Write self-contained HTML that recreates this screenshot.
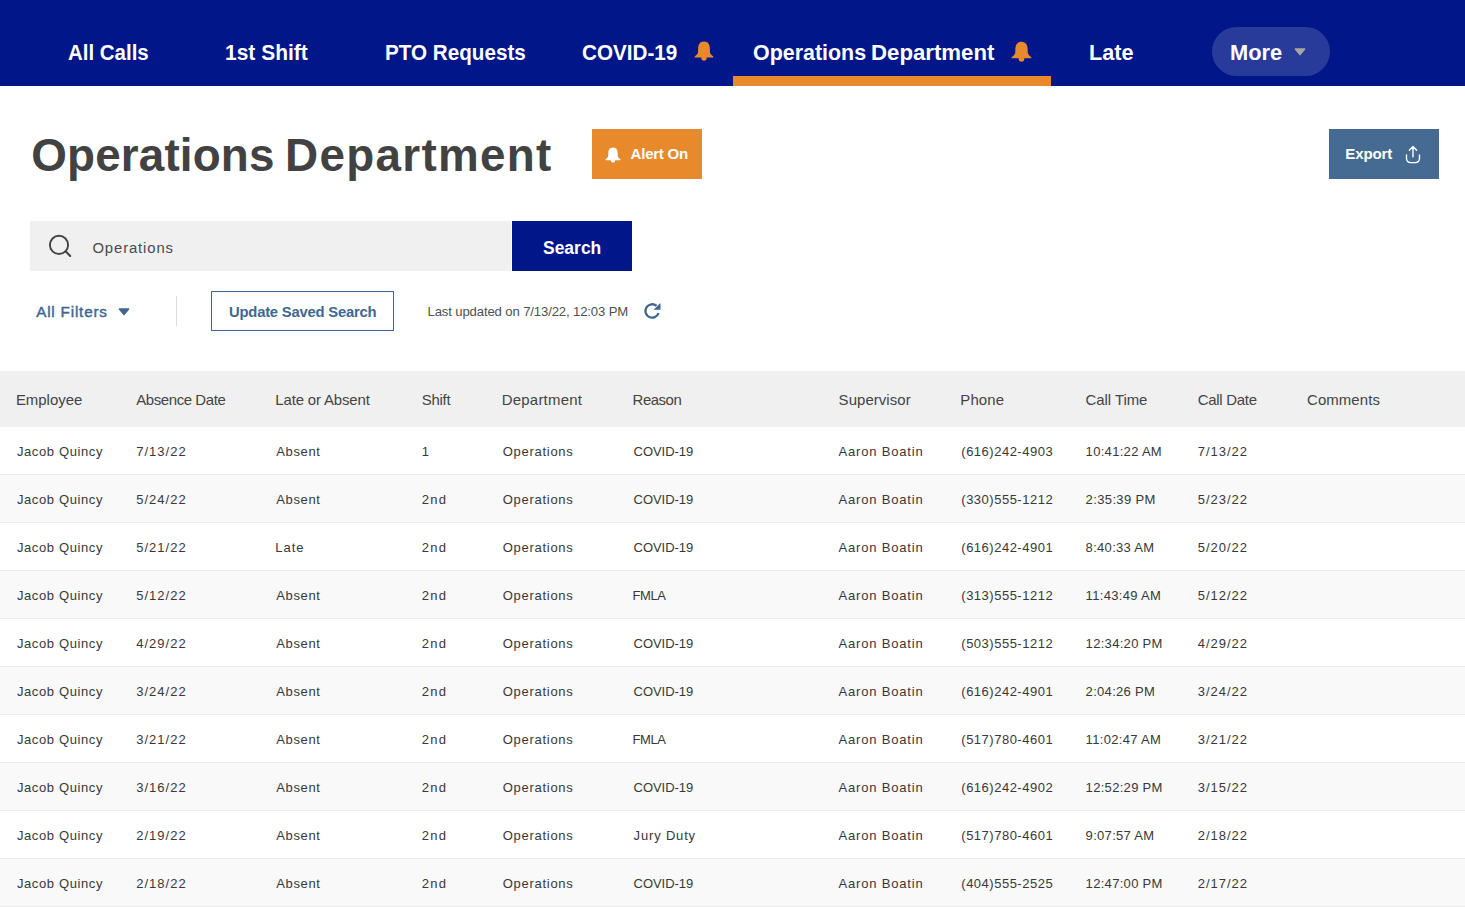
<!DOCTYPE html>
<html><head><meta charset="utf-8">
<style>
html,body{margin:0;padding:0;}
body{width:1465px;height:907px;position:relative;overflow:hidden;background:#fff;font-family:"Liberation Sans",sans-serif;}
.t{position:absolute;white-space:pre;}
.rt{font-size:13px;line-height:15px;letter-spacing:0.66px;color:#383838;}
.b{position:absolute;}
.ic{position:absolute;overflow:visible;}
.row{position:absolute;left:0;width:1465px;height:47px;border-bottom:1px solid #ececec;}
</style></head><body>
<div class="b" style="left:0;top:0;width:1465px;height:86px;background:#001689"></div>
<div class="b" style="left:733px;top:76px;width:318px;height:10px;background:#e8892c"></div>
<div class="b" style="left:1212px;top:27px;width:118px;height:49px;border-radius:25px;background:#283a9a"></div>
<svg class="ic" style="left:1294px;top:47.8px;width:12px;height:8px" viewBox="0 0 12 8"><path d="M1.3 1h9.4L6 6.7z" fill="#a8a8a0" stroke="#a8a8a0" stroke-width="1.3" stroke-linejoin="round"/></svg>
<svg class="ic" style="left:694px;top:41px;width:20px;height:20px" viewBox="0 0 20 20"><path fill="#e8892c" d="M10 0.6C5.6 0.6 4.1 4.2 4.1 7.8V10.4C4.1 12.5 2.6 13.9 0.9 15.2Q0 15.9 1 16.5H19Q20 15.9 19.1 15.2C17.4 13.9 15.9 12.5 15.9 10.4V7.8C15.9 4.2 14.4 0.6 10 0.6z"/><circle cx="10" cy="17" r="2.7" fill="#e8892c"/></svg>
<svg class="ic" style="left:1011px;top:41px;width:21px;height:21px" viewBox="0 0 20 20"><path fill="#e8892c" d="M10 0.6C5.6 0.6 4.1 4.2 4.1 7.8V10.4C4.1 12.5 2.6 13.9 0.9 15.2Q0 15.9 1 16.5H19Q20 15.9 19.1 15.2C17.4 13.9 15.9 12.5 15.9 10.4V7.8C15.9 4.2 14.4 0.6 10 0.6z"/><circle cx="10" cy="17" r="2.7" fill="#e8892c"/></svg>
<div class="b" style="left:592px;top:129px;width:110px;height:50px;background:#e8892c"></div>
<svg class="ic" style="left:604.5px;top:146.5px;width:16px;height:16px" viewBox="0 0 20 20"><path fill="#fff" d="M10 0.6C5.6 0.6 4.1 4.2 4.1 7.8V10.4C4.1 12.5 2.6 13.9 0.9 15.2Q0 15.9 1 16.5H19Q20 15.9 19.1 15.2C17.4 13.9 15.9 12.5 15.9 10.4V7.8C15.9 4.2 14.4 0.6 10 0.6z"/><circle cx="10" cy="17" r="2.7" fill="#fff"/></svg>
<div class="b" style="left:1329px;top:129px;width:110px;height:50px;background:#456b93"></div>
<svg class="ic" style="left:1404.5px;top:144.5px;width:16px;height:19px" viewBox="0 0 16 19"><path d="M8 1.6V11.8M4.4 5.2L8 1.6L11.6 5.2M1.5 10V13.6A4 4 0 0 0 5.5 17.6H10.5A4 4 0 0 0 14.5 13.6V10" fill="none" stroke="#fff" stroke-width="1.4" stroke-linecap="round" stroke-linejoin="round"/></svg>
<div class="b" style="left:30px;top:221px;width:481px;height:50px;background:#f0f0f0"></div>
<svg class="ic" style="left:46px;top:232px;width:28px;height:28px" viewBox="0 0 28 28"><circle cx="13" cy="12.9" r="9.1" fill="none" stroke="#444" stroke-width="1.9"/><path d="M19.6 19.3L24.2 23.9" stroke="#444" stroke-width="2.1" stroke-linecap="round"/></svg>
<div class="b" style="left:512px;top:221px;width:120px;height:50px;background:#001689"></div>
<svg class="ic" style="left:118px;top:308px;width:12px;height:8px" viewBox="0 0 12 8"><path d="M1.3 1h9.4L6 6.7z" fill="#3f6793" stroke="#3f6793" stroke-width="1.3" stroke-linejoin="round"/></svg>
<div class="b" style="left:176px;top:296px;width:1px;height:30px;background:#dfdcdc"></div>
<div class="b" style="left:211px;top:291px;width:181px;height:38px;border:1px solid #3f6793"></div>
<svg class="ic" style="left:642px;top:301px;width:20px;height:20px" viewBox="0 0 20 20"><path d="M16.53 11.99A6.7 6.7 0 1 1 14.5 4.9" fill="none" stroke="#3f6793" stroke-width="2.3"/><path d="M18.5 2V8.7H11.5z" fill="#3f6793"/></svg>
<div class="b" style="left:0;top:371px;width:1465px;height:56px;background:#f0f0f0"></div>
<div class="row" style="top:427px;background:#fff"></div>
<div class="t rt" style="left:16.9px;top:444px;letter-spacing:0.622px">Jacob Quincy</div>
<div class="t rt" style="left:136.3px;top:444px;letter-spacing:0.993px">7/13/22</div>
<div class="t rt" style="left:276.3px;top:444px;letter-spacing:0.628px">Absent</div>
<div class="t rt" style="left:421.7px;top:444px;letter-spacing:0.000px">1</div>
<div class="t rt" style="left:502.7px;top:444px;letter-spacing:0.723px">Operations</div>
<div class="t rt" style="left:633.6px;top:444px;letter-spacing:-0.061px">COVID-19</div>
<div class="t rt" style="left:838.6px;top:444px;letter-spacing:0.815px">Aaron Boatin</div>
<div class="t rt" style="left:961.3px;top:444px;letter-spacing:0.504px">(616)242-4903</div>
<div class="t rt" style="left:1085.6px;top:444px;letter-spacing:0.311px">10:41:22 AM</div>
<div class="t rt" style="left:1197.7px;top:444px;letter-spacing:0.993px">7/13/22</div>
<div class="row" style="top:475px;background:#f9f9f9"></div>
<div class="t rt" style="left:16.9px;top:492px;letter-spacing:0.622px">Jacob Quincy</div>
<div class="t rt" style="left:136.3px;top:492px;letter-spacing:0.993px">5/24/22</div>
<div class="t rt" style="left:276.3px;top:492px;letter-spacing:0.628px">Absent</div>
<div class="t rt" style="left:421.7px;top:492px;letter-spacing:1.270px">2nd</div>
<div class="t rt" style="left:502.7px;top:492px;letter-spacing:0.723px">Operations</div>
<div class="t rt" style="left:633.6px;top:492px;letter-spacing:-0.061px">COVID-19</div>
<div class="t rt" style="left:838.6px;top:492px;letter-spacing:0.815px">Aaron Boatin</div>
<div class="t rt" style="left:961.3px;top:492px;letter-spacing:0.504px">(330)555-1212</div>
<div class="t rt" style="left:1085.6px;top:492px;letter-spacing:0.372px">2:35:39 PM</div>
<div class="t rt" style="left:1197.7px;top:492px;letter-spacing:0.993px">5/23/22</div>
<div class="row" style="top:523px;background:#fff"></div>
<div class="t rt" style="left:16.9px;top:540px;letter-spacing:0.622px">Jacob Quincy</div>
<div class="t rt" style="left:136.3px;top:540px;letter-spacing:0.993px">5/21/22</div>
<div class="t rt" style="left:275.3px;top:540px;letter-spacing:0.976px">Late</div>
<div class="t rt" style="left:421.7px;top:540px;letter-spacing:1.270px">2nd</div>
<div class="t rt" style="left:502.7px;top:540px;letter-spacing:0.723px">Operations</div>
<div class="t rt" style="left:633.6px;top:540px;letter-spacing:-0.061px">COVID-19</div>
<div class="t rt" style="left:838.6px;top:540px;letter-spacing:0.815px">Aaron Boatin</div>
<div class="t rt" style="left:961.3px;top:540px;letter-spacing:0.504px">(616)242-4901</div>
<div class="t rt" style="left:1085.6px;top:540px;letter-spacing:0.311px">8:40:33 AM</div>
<div class="t rt" style="left:1197.7px;top:540px;letter-spacing:0.993px">5/20/22</div>
<div class="row" style="top:571px;background:#f9f9f9"></div>
<div class="t rt" style="left:16.9px;top:588px;letter-spacing:0.622px">Jacob Quincy</div>
<div class="t rt" style="left:136.3px;top:588px;letter-spacing:0.993px">5/12/22</div>
<div class="t rt" style="left:276.3px;top:588px;letter-spacing:0.628px">Absent</div>
<div class="t rt" style="left:421.7px;top:588px;letter-spacing:1.270px">2nd</div>
<div class="t rt" style="left:502.7px;top:588px;letter-spacing:0.723px">Operations</div>
<div class="t rt" style="left:632.6px;top:588px;letter-spacing:-0.433px">FMLA</div>
<div class="t rt" style="left:838.6px;top:588px;letter-spacing:0.815px">Aaron Boatin</div>
<div class="t rt" style="left:961.3px;top:588px;letter-spacing:0.504px">(313)555-1212</div>
<div class="t rt" style="left:1085.6px;top:588px;letter-spacing:0.311px">11:43:49 AM</div>
<div class="t rt" style="left:1197.7px;top:588px;letter-spacing:0.993px">5/12/22</div>
<div class="row" style="top:619px;background:#fff"></div>
<div class="t rt" style="left:16.9px;top:636px;letter-spacing:0.622px">Jacob Quincy</div>
<div class="t rt" style="left:136.3px;top:636px;letter-spacing:0.993px">4/29/22</div>
<div class="t rt" style="left:276.3px;top:636px;letter-spacing:0.628px">Absent</div>
<div class="t rt" style="left:421.7px;top:636px;letter-spacing:1.270px">2nd</div>
<div class="t rt" style="left:502.7px;top:636px;letter-spacing:0.723px">Operations</div>
<div class="t rt" style="left:633.6px;top:636px;letter-spacing:-0.061px">COVID-19</div>
<div class="t rt" style="left:838.6px;top:636px;letter-spacing:0.815px">Aaron Boatin</div>
<div class="t rt" style="left:961.3px;top:636px;letter-spacing:0.504px">(503)555-1212</div>
<div class="t rt" style="left:1085.6px;top:636px;letter-spacing:0.311px">12:34:20 PM</div>
<div class="t rt" style="left:1197.7px;top:636px;letter-spacing:0.993px">4/29/22</div>
<div class="row" style="top:667px;background:#f9f9f9"></div>
<div class="t rt" style="left:16.9px;top:684px;letter-spacing:0.622px">Jacob Quincy</div>
<div class="t rt" style="left:136.3px;top:684px;letter-spacing:0.993px">3/24/22</div>
<div class="t rt" style="left:276.3px;top:684px;letter-spacing:0.628px">Absent</div>
<div class="t rt" style="left:421.7px;top:684px;letter-spacing:1.270px">2nd</div>
<div class="t rt" style="left:502.7px;top:684px;letter-spacing:0.723px">Operations</div>
<div class="t rt" style="left:633.6px;top:684px;letter-spacing:-0.061px">COVID-19</div>
<div class="t rt" style="left:838.6px;top:684px;letter-spacing:0.815px">Aaron Boatin</div>
<div class="t rt" style="left:961.3px;top:684px;letter-spacing:0.504px">(616)242-4901</div>
<div class="t rt" style="left:1085.6px;top:684px;letter-spacing:0.311px">2:04:26 PM</div>
<div class="t rt" style="left:1197.7px;top:684px;letter-spacing:0.993px">3/24/22</div>
<div class="row" style="top:715px;background:#fff"></div>
<div class="t rt" style="left:16.9px;top:732px;letter-spacing:0.622px">Jacob Quincy</div>
<div class="t rt" style="left:136.3px;top:732px;letter-spacing:0.993px">3/21/22</div>
<div class="t rt" style="left:276.3px;top:732px;letter-spacing:0.628px">Absent</div>
<div class="t rt" style="left:421.7px;top:732px;letter-spacing:1.270px">2nd</div>
<div class="t rt" style="left:502.7px;top:732px;letter-spacing:0.723px">Operations</div>
<div class="t rt" style="left:632.6px;top:732px;letter-spacing:-0.433px">FMLA</div>
<div class="t rt" style="left:838.6px;top:732px;letter-spacing:0.815px">Aaron Boatin</div>
<div class="t rt" style="left:961.3px;top:732px;letter-spacing:0.504px">(517)780-4601</div>
<div class="t rt" style="left:1085.6px;top:732px;letter-spacing:0.311px">11:02:47 AM</div>
<div class="t rt" style="left:1197.7px;top:732px;letter-spacing:0.993px">3/21/22</div>
<div class="row" style="top:763px;background:#f9f9f9"></div>
<div class="t rt" style="left:16.9px;top:780px;letter-spacing:0.622px">Jacob Quincy</div>
<div class="t rt" style="left:136.3px;top:780px;letter-spacing:0.993px">3/16/22</div>
<div class="t rt" style="left:276.3px;top:780px;letter-spacing:0.628px">Absent</div>
<div class="t rt" style="left:421.7px;top:780px;letter-spacing:1.270px">2nd</div>
<div class="t rt" style="left:502.7px;top:780px;letter-spacing:0.723px">Operations</div>
<div class="t rt" style="left:633.6px;top:780px;letter-spacing:-0.061px">COVID-19</div>
<div class="t rt" style="left:838.6px;top:780px;letter-spacing:0.815px">Aaron Boatin</div>
<div class="t rt" style="left:961.3px;top:780px;letter-spacing:0.504px">(616)242-4902</div>
<div class="t rt" style="left:1085.6px;top:780px;letter-spacing:0.311px">12:52:29 PM</div>
<div class="t rt" style="left:1197.7px;top:780px;letter-spacing:0.993px">3/15/22</div>
<div class="row" style="top:811px;background:#fff"></div>
<div class="t rt" style="left:16.9px;top:828px;letter-spacing:0.622px">Jacob Quincy</div>
<div class="t rt" style="left:136.3px;top:828px;letter-spacing:0.993px">2/19/22</div>
<div class="t rt" style="left:276.3px;top:828px;letter-spacing:0.628px">Absent</div>
<div class="t rt" style="left:421.7px;top:828px;letter-spacing:1.270px">2nd</div>
<div class="t rt" style="left:502.7px;top:828px;letter-spacing:0.723px">Operations</div>
<div class="t rt" style="left:633.6px;top:828px;letter-spacing:0.825px">Jury Duty</div>
<div class="t rt" style="left:838.6px;top:828px;letter-spacing:0.815px">Aaron Boatin</div>
<div class="t rt" style="left:961.3px;top:828px;letter-spacing:0.504px">(517)780-4601</div>
<div class="t rt" style="left:1085.6px;top:828px;letter-spacing:0.311px">9:07:57 AM</div>
<div class="t rt" style="left:1197.7px;top:828px;letter-spacing:0.993px">2/18/22</div>
<div class="row" style="top:859px;background:#f9f9f9"></div>
<div class="t rt" style="left:16.9px;top:876px;letter-spacing:0.622px">Jacob Quincy</div>
<div class="t rt" style="left:136.3px;top:876px;letter-spacing:0.993px">2/18/22</div>
<div class="t rt" style="left:276.3px;top:876px;letter-spacing:0.628px">Absent</div>
<div class="t rt" style="left:421.7px;top:876px;letter-spacing:1.270px">2nd</div>
<div class="t rt" style="left:502.7px;top:876px;letter-spacing:0.723px">Operations</div>
<div class="t rt" style="left:633.6px;top:876px;letter-spacing:-0.061px">COVID-19</div>
<div class="t rt" style="left:838.6px;top:876px;letter-spacing:0.815px">Aaron Boatin</div>
<div class="t rt" style="left:961.3px;top:876px;letter-spacing:0.504px">(404)555-2525</div>
<div class="t rt" style="left:1085.6px;top:876px;letter-spacing:0.311px">12:47:00 PM</div>
<div class="t rt" style="left:1197.7px;top:876px;letter-spacing:0.993px">2/17/22</div>
<div class="t" style="left:68.30px;top:40.00px;font-size:22.63px;line-height:25px;font-weight:700;color:#fff;transform-origin:0 0;transform:scaleX(0.9043)">All Calls</div>
<div class="t" style="left:225.07px;top:40.00px;font-size:22.63px;line-height:25px;font-weight:700;color:#fff;transform-origin:0 0;transform:scaleX(0.9277)">1st Shift</div>
<div class="t" style="left:384.69px;top:40.00px;font-size:22.63px;line-height:25px;font-weight:700;color:#fff;transform-origin:0 0;transform:scaleX(0.9132)">PTO Requests</div>
<div class="t" style="left:582.00px;top:40.00px;font-size:22.63px;line-height:25px;font-weight:700;color:#fff;transform-origin:0 0;transform:scaleX(0.9126)">COVID-19</div>
<div class="t" style="left:752.50px;top:40.00px;font-size:22.63px;line-height:25px;font-weight:700;color:#fff;transform-origin:0 0;transform:scaleX(0.9466)">Operations</div>
<div class="t" style="left:871.12px;top:40.00px;font-size:22.63px;line-height:25px;font-weight:700;color:#fff;transform-origin:0 0;transform:scaleX(0.9817)">Department</div>
<div class="t" style="left:1089.04px;top:40.00px;font-size:22.63px;line-height:25px;font-weight:700;color:#fff;transform-origin:0 0;transform:scaleX(0.9569)">Late</div>
<div class="t" style="left:1229.53px;top:40.00px;font-size:22.63px;line-height:25px;font-weight:700;color:#fff;transform-origin:0 0;transform:scaleX(0.9662)">More</div>
<div class="t" style="left:31.30px;top:130.00px;font-size:45.81px;line-height:51px;font-weight:700;color:#424242;letter-spacing:0.157px">Operations</div>
<div class="t" style="left:285.10px;top:130.00px;font-size:45.81px;line-height:51px;font-weight:700;color:#424242;letter-spacing:1.297px">Department</div>
<div class="t" style="left:630.60px;top:145.00px;font-size:15.08px;line-height:17px;font-weight:700;color:#fff;letter-spacing:-0.267px">Alert On</div>
<div class="t" style="left:1345.30px;top:145.00px;font-size:15.08px;line-height:17px;font-weight:700;color:#fff;letter-spacing:-0.166px">Export</div>
<div class="t" style="left:92.40px;top:240.00px;font-size:14.87px;line-height:16px;font-weight:400;color:#4a4a4a;letter-spacing:0.883px">Operations</div>
<div class="t" style="left:543.20px;top:237.20px;font-size:19.06px;line-height:21px;font-weight:700;color:#fff;transform-origin:0 0;transform:scaleX(0.9174)">Search</div>
<div class="t" style="left:36.20px;top:303.00px;font-size:15.22px;line-height:17px;font-weight:400;color:#3f6793;letter-spacing:0.814px;-webkit-text-stroke:0.45px #3f6793">All Filters</div>
<div class="t" style="left:229.00px;top:303.80px;font-size:14.8px;line-height:16px;font-weight:700;color:#3f6793;letter-spacing:-0.210px">Update Saved Search</div>
<div class="t" style="left:427.50px;top:304.30px;font-size:13.13px;line-height:15px;font-weight:400;color:#505050;letter-spacing:-0.135px">Last updated on 7/13/22, 12:03 PM</div>
<div class="t" style="left:15.90px;top:391.30px;font-size:14.94px;line-height:17px;font-weight:400;color:#444;letter-spacing:-0.002px">Employee</div>
<div class="t" style="left:136.30px;top:391.30px;font-size:14.94px;line-height:17px;font-weight:400;color:#444;letter-spacing:-0.402px">Absence Date</div>
<div class="t" style="left:275.30px;top:391.30px;font-size:14.94px;line-height:17px;font-weight:400;color:#444;letter-spacing:-0.139px">Late or Absent</div>
<div class="t" style="left:421.70px;top:391.30px;font-size:14.94px;line-height:17px;font-weight:400;color:#444;letter-spacing:-0.235px">Shift</div>
<div class="t" style="left:501.70px;top:391.30px;font-size:14.94px;line-height:17px;font-weight:400;color:#444;letter-spacing:0.245px">Department</div>
<div class="t" style="left:632.60px;top:391.30px;font-size:14.94px;line-height:17px;font-weight:400;color:#444;letter-spacing:-0.476px">Reason</div>
<div class="t" style="left:838.60px;top:391.30px;font-size:14.94px;line-height:17px;font-weight:400;color:#444;letter-spacing:0.075px">Supervisor</div>
<div class="t" style="left:960.30px;top:391.30px;font-size:14.94px;line-height:17px;font-weight:400;color:#444;letter-spacing:0.129px">Phone</div>
<div class="t" style="left:1085.60px;top:391.30px;font-size:14.94px;line-height:17px;font-weight:400;color:#444;letter-spacing:-0.052px">Call Time</div>
<div class="t" style="left:1197.70px;top:391.30px;font-size:14.94px;line-height:17px;font-weight:400;color:#444;letter-spacing:-0.266px">Call Date</div>
<div class="t" style="left:1307.00px;top:391.30px;font-size:14.94px;line-height:17px;font-weight:400;color:#444;letter-spacing:0.093px">Comments</div>
</body></html>
